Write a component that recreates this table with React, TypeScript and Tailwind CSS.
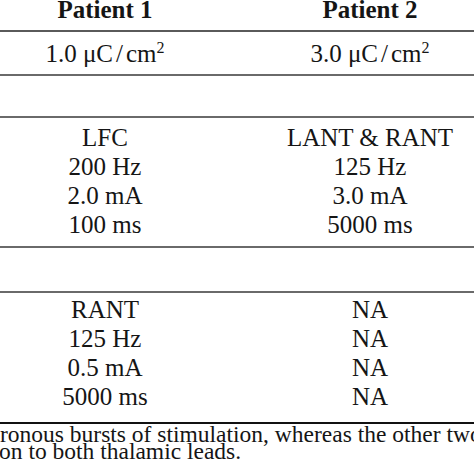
import React from "react";

const serif = { fontFamily: '"Liberation Serif", "Times New Roman", serif' };

function Cell2({ left, right, className = "" }: { left: React.ReactNode; right: React.ReactNode; className?: string }) {
  return (
    <div className={"flex " + className}>
      <div className="w-[210px] text-center">{left}</div>
      <div className="flex-1 pl-[56px] text-center">{right}</div>
    </div>
  );
}

function Dose({ v }: { v: string }) {
  return (
    <span>
      {v} μC<span className="mx-[3px]">/</span>cm
      <sup className="text-[16px] top-[-0.55em]">2</sup>
    </span>
  );
}

export default function App() {
  const g1 = [
    ["LFC", "LANT & RANT"],
    ["200 Hz", "125 Hz"],
    ["2.0 mA", "3.0 mA"],
    ["100 ms", "5000 ms"],
  ];
  const g2 = [
    ["RANT", "NA"],
    ["125 Hz", "NA"],
    ["0.5 mA", "NA"],
    ["5000 ms", "NA"],
  ];
  return (
    <div className="w-[474px] h-[474px] overflow-hidden bg-white text-[#151515]" style={serif}>
      <div className="h-[32px] border-b-2 border-[#5a5a5a] text-[25px] leading-[20px] font-bold">
        <Cell2 left="Patient 1" right="Patient 2" />
      </div>
      <div className="h-[44px] border-b-2 border-[#6a6a6a] pt-[7px] text-[25px] leading-[29px]">
        <Cell2 left={<Dose v="1.0" />} right={<Dose v="3.0" />} />
      </div>
      <div className="h-[42px] border-b-2 border-[#6a6a6a]" />
      <div className="h-[130px] border-b-2 border-[#6a6a6a] pt-[5px] text-[25px] leading-[29px]">
        {g1.map(([a, b]) => (
          <Cell2 key={a + b} left={a} right={b} />
        ))}
      </div>
      <div className="h-[45px] border-b-2 border-[#6a6a6a]" />
      <div className="h-[131px] border-b-2 border-[#111] pt-[2px] text-[25px] leading-[29px]">
        {g2.map(([a, b], i) => (
          <Cell2 key={i} left={a} right={b} />
        ))}
      </div>
      <div className="pt-[1.5px] text-[23.5px] leading-[17px] whitespace-nowrap">
        <div>ronous bursts of stimulation, whereas the other two</div>
        <div className="ml-[-1px]">on to both thalamic leads.</div>
      </div>
    </div>
  );
}
